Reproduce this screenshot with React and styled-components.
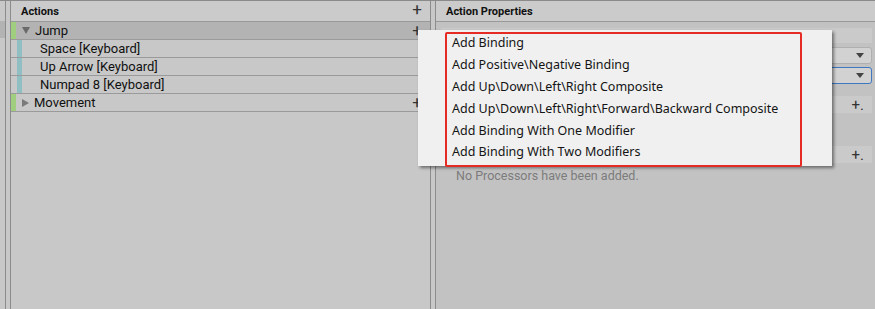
import React from 'react'
import styled, { createGlobalStyle } from 'styled-components'

const Global = createGlobalStyle`
  html, body { margin: 0; padding: 0; }
  body {
    width: 875px;
    height: 309px;
    overflow: hidden;
    background: #c8c8c8;
    font-family: Roboto, "Liberation Sans", sans-serif;
  }
`

const Window = styled.div`
  position: relative;
  display: flex;
  width: 875px;
  height: 309px;
  border-top: 1px solid #8a8a8a;
  box-sizing: border-box;
  background: #c8c8c8;
`

const SideStrip = styled.div`
  width: 5px;
  flex: none;
  border-right: 1px solid #8c8c8c;
  padding-top: 20px;
`

const StripBand = styled.div`
  height: 17px;
  background: #b3b3b3;
`

const Panel = styled.div`
  display: flex;
  flex-direction: column;
  flex: ${p => (p.grow ? '1' : 'none')};
  width: ${p => (p.grow ? 'auto' : '419px')};
  margin-left: ${p => p.offset}px;
  border-left: 1px solid #8c8c8c;
  border-right: ${p => (p.grow ? 'none' : '1px solid #8c8c8c')};
  background: ${p => p.bg};
`

const PanelHeader = styled.div`
  display: flex;
  align-items: center;
  justify-content: space-between;
  height: 20px;
  padding: 0 8px 0 10px;
  border-bottom: 1px solid #999;
  background: #cbcbcb;
  font-size: 11px;
  font-weight: 700;
  color: #111;
`

const Plus = styled.span`
  font-size: 17px;
  font-weight: 400;
  color: #333;
  line-height: 1;
  margin-top: -3px;
`

const Row = styled.div`
  display: flex;
  align-items: center;
  height: 17px;
  border-bottom: 1px solid #9a9a9a;
  background: ${p => (p.selected ? '#b3b3b3' : 'transparent')};
  font-size: 13px;
  color: #101010;
`

const Bar = styled.div`
  width: 5px;
  align-self: stretch;
  flex: none;
  margin-left: ${p => p.indent}px;
  background: ${p => p.color};
`

const Caret = styled.span`
  width: 0;
  height: 0;
  margin: 0 5px 0 6px;
  border-style: solid;
  ${p =>
    p.open
      ? 'border-width: 7px 4.5px 0 4.5px; border-color: #6a6a6a transparent transparent transparent;'
      : 'border-width: 4.5px 0 4.5px 7px; border-color: transparent transparent transparent #7a7a7a;'}
`

const Label = styled.span`
  padding-left: ${p => p.pad || 0}px;
  white-space: nowrap;
`

const RowPlus = styled.span`
  margin-left: auto;
  margin-right: 8px;
  font-size: 17px;
  color: #333;
  line-height: 1;
`

const Props = styled.div`
  display: flex;
  flex-direction: column;
  padding: 6px 3px 0 5px;
`

const Band = styled.div`
  display: flex;
  align-items: center;
  justify-content: flex-end;
  height: ${p => p.h || 16}px;
  margin-top: ${p => p.mt || 0}px;
  padding-right: 8px;
  background: #cacaca;
  font-size: 15px;
  color: #333;
`

const Dropdown = styled.div`
  display: flex;
  align-items: center;
  justify-content: flex-end;
  height: 15px;
  margin-top: ${p => p.mt}px;
  margin-left: 330px;
  padding-right: 7px;
  border-radius: 3px;
  background: #d2d2d2;
  border: 1px solid ${p => (p.focus ? '#3f78c0' : '#b0b0b0')};
`

const DropArrow = styled.span`
  width: 0;
  height: 0;
  border-style: solid;
  border-width: 5px 4px 0 4px;
  border-color: #444 transparent transparent transparent;
`

const Hint = styled.div`
  padding: 5px 0 0 15px;
  font-size: 12.5px;
  color: #7c7c7c;
`

const Menu = styled.div`
  position: absolute;
  left: 418px;
  top: 29px;
  width: 414px;
  height: 136px;
  background: #f0f0f0;
  box-shadow: 2px 2px 3px rgba(0, 0, 0, 0.45);
  box-sizing: border-box;
  padding-left: 27px;
`

const Highlight = styled.div`
  width: 357px;
  height: 135px;
  margin-top: 2px;
  box-sizing: border-box;
  border: 2px solid #e52b24;
  border-radius: 2px;
`

const MenuItem = styled.div`
  box-sizing: border-box;
  height: 21.8px;
  display: flex;
  align-items: center;
  padding: 0 0 4px 5px;
  font-family: "Noto Sans", "Open Sans", sans-serif;
  font-size: 12.5px;
  color: #141414;
  white-space: nowrap;
`

const items = [
  'Add Binding',
  'Add Positive\\Negative Binding',
  'Add Up\\Down\\Left\\Right Composite',
  'Add Up\\Down\\Left\\Right\\Forward\\Backward Composite',
  'Add Binding With One Modifier',
  'Add Binding With Two Modifiers',
]

export default function App() {
  return (
    <>
      <Global />
      <Window>
        <SideStrip>
          <StripBand />
        </SideStrip>
        <Panel offset={4} bg="#c8c8c8">
          <PanelHeader>
            <span>Actions</span>
            <Plus>+</Plus>
          </PanelHeader>
          <Row selected>
            <Bar indent={0} color="#9fcf7e" />
            <Caret open />
            <Label>Jump</Label>
            <RowPlus>+</RowPlus>
          </Row>
          {['Space [Keyboard]', 'Up Arrow [Keyboard]', 'Numpad 8 [Keyboard]'].map(b => (
            <Row key={b}>
              <Bar indent={6} color="#8fbfc2" />
              <Label pad={18}>{b}</Label>
            </Row>
          ))}
          <Row>
            <Bar indent={0} color="#9fcf7e" />
            <Caret />
            <Label>Movement</Label>
            <RowPlus>+</RowPlus>
          </Row>
        </Panel>
        <Panel offset={4} grow bg="#c2c2c2">
          <PanelHeader>
            <span>Action Properties</span>
          </PanelHeader>
          <Props>
            <Band h={15} />
            <Dropdown mt={4}>
              <DropArrow />
            </Dropdown>
            <Dropdown mt={3} focus>
              <DropArrow />
            </Dropdown>
            <Band h={17} mt={12}>+.</Band>
            <Band h={17} mt={33}>+.</Band>
            <Hint>No Processors have been added.</Hint>
          </Props>
        </Panel>
        <Menu>
          <Highlight>
            {items.map(t => (
              <MenuItem key={t}>{t}</MenuItem>
            ))}
          </Highlight>
        </Menu>
      </Window>
    </>
  )
}
